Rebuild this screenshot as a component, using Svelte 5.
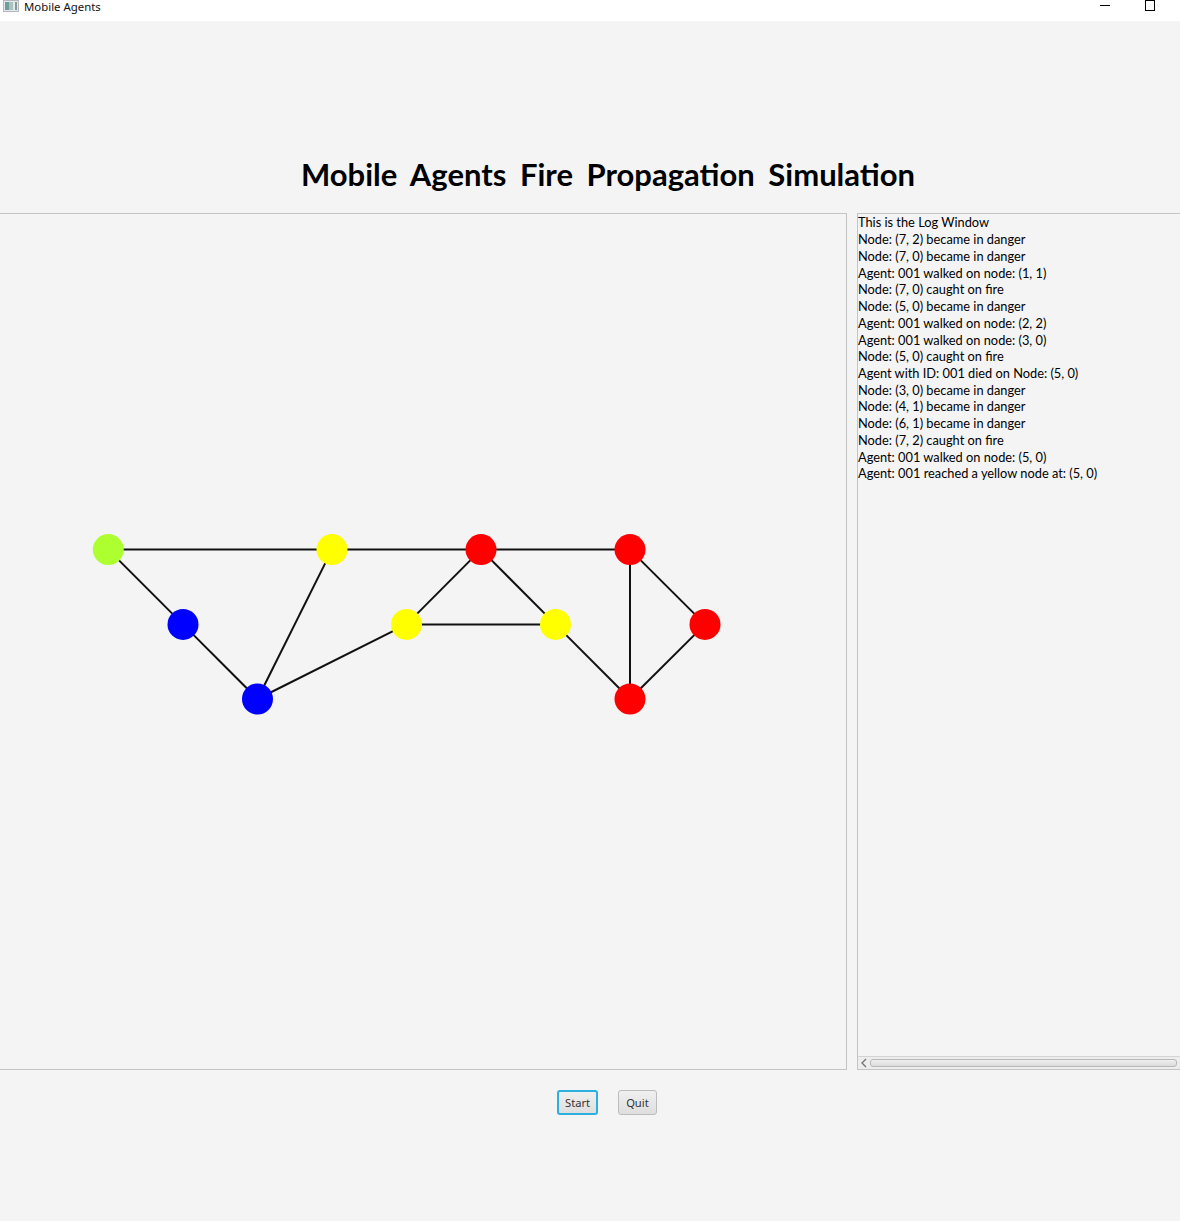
<script>
  const nodes = {
    a: { x: 108.3, y: 335.6, fill: "#adff2f" },
    b: { x: 183, y: 410.4, fill: "#0000ff" },
    c: { x: 257.5, y: 485, fill: "#0000ff" },
    d: { x: 332, y: 335.6, fill: "#ffff00" },
    e: { x: 406.5, y: 410.4, fill: "#ffff00" },
    f: { x: 481, y: 335.6, fill: "#ff0000" },
    g: { x: 555.5, y: 410.4, fill: "#ffff00" },
    h: { x: 630, y: 335.6, fill: "#ff0000" },
    i: { x: 705, y: 410.4, fill: "#ff0000" },
    j: { x: 630, y: 485, fill: "#ff0000" },
  };
  const edges = ["ad", "df", "fh", "ab", "bc", "cd", "ce", "ef", "eg", "fg", "gj", "hj", "hi", "ij"];

  const log = [
    "This is the Log Window",
    "Node: (7, 2) became in danger",
    "Node: (7, 0) became in danger",
    "Agent: 001 walked on node: (1, 1)",
    "Node: (7, 0) caught on fire",
    "Node: (5, 0) became in danger",
    "Agent: 001 walked on node: (2, 2)",
    "Agent: 001 walked on node: (3, 0)",
    "Node: (5, 0) caught on fire",
    "Agent with ID: 001 died on Node: (5, 0)",
    "Node: (3, 0) became in danger",
    "Node: (4, 1) became in danger",
    "Node: (6, 1) became in danger",
    "Node: (7, 2) caught on fire",
    "Agent: 001 walked on node: (5, 0)",
    "Agent: 001 reached a yellow node at: (5, 0)",
  ];
</script>

<div class="window">
  <header class="titlebar">
    <div class="app">
      <svg class="app-icon" width="16" height="14" viewBox="0 0 16 14">
        <rect x="0.5" y="1.5" width="15" height="11" fill="#e4e8e8" stroke="#b4b8bc" />
        <rect x="2" y="3" width="4" height="8" fill="#6f9d9a" />
        <rect x="6" y="3" width="4" height="8" fill="#a9c4c0" />
        <rect x="12" y="3" width="2" height="8" fill="#8a969c" />
      </svg>
      <span class="app-name">Mobile Agents</span>
    </div>
    <div class="controls">
      <span class="minimize"></span>
      <span class="maximize"></span>
    </div>
  </header>

  <h1>Mobile Agents Fire Propagation Simulation</h1>

  <main>
    <section class="graph">
      <svg width="846" height="855" viewBox="0 0 846 855">
        {#each edges as e}
          <line x1={nodes[e[0]].x} y1={nodes[e[0]].y} x2={nodes[e[1]].x} y2={nodes[e[1]].y} stroke="#111" stroke-width="2" />
        {/each}
        {#each Object.values(nodes) as n}
          <circle cx={n.x} cy={n.y} r="15.5" fill={n.fill} />
        {/each}
      </svg>
    </section>

    <section class="log">
      <div class="lines">
        {#each log as line}
          <div>{line}</div>
        {/each}
      </div>
      <div class="scrollbar">
        <svg width="8" height="10" viewBox="0 0 8 10">
          <path d="M6 1 L2 5 L6 9" fill="none" stroke="#777" stroke-width="1.4" />
        </svg>
        <div class="thumb"></div>
      </div>
    </section>
  </main>

  <footer>
    <button class="focused">Start</button>
    <button>Quit</button>
  </footer>
</div>

<style>
  :global(body) {
    background: #f4f4f4;
  }
  .window {
    width: 1180px;
    height: 1221px;
    display: flex;
    flex-direction: column;
    background: #f4f4f4;
    overflow: hidden;
  }
  .titlebar {
    height: 21px;
    flex: none;
    background: #fff;
    display: flex;
    justify-content: space-between;
    font-family: "Noto Sans", sans-serif;
    font-size: 11.4px;
    color: #111;
  }
  .app {
    display: flex;
    align-items: flex-start;
    gap: 5px;
    padding-left: 3px;
    line-height: 12px;
  }
  .app-icon {
    margin-top: -1px;
  }
  .app-name {
    margin-top: 1px;
  }
  .controls {
    display: flex;
    align-items: flex-start;
    gap: 35px;
    padding-right: 25px;
  }
  .minimize {
    width: 10px;
    height: 1px;
    margin-top: 5px;
    background: #000;
  }
  .maximize {
    width: 8px;
    height: 9px;
    margin-top: 0;
    border: 1px solid #000;
  }
  h1 {
    margin: 0;
    height: 192px;
    flex: none;
    box-sizing: border-box;
    padding: 134px 0 0 36px;
    text-align: center;
    font-family: "Lato", sans-serif;
    font-size: 31px;
    line-height: 38px;
    font-weight: 700;
    color: #000;
    word-spacing: 6px;
  }
  main {
    height: 857px;
    flex: none;
    display: flex;
    gap: 10px;
  }
  .graph {
    width: 847px;
    box-sizing: border-box;
    border: 1px solid #c4c4c4;
    border-left: 0;
    overflow: hidden;
  }
  .graph svg {
    display: block;
  }
  .log {
    flex: 1;
    box-sizing: border-box;
    border: 1px solid #c4c4c4;
    border-right: 0;
    display: flex;
    flex-direction: column;
  }
  .lines {
    flex: 1;
    padding: 0.4px 0 0 0;
    font-family: "Lato", sans-serif;
    font-size: 12.8px;
    line-height: 16.73px;
    color: #000;
  }
  .scrollbar {
    height: 12px;
    flex: none;
    display: flex;
    align-items: center;
    gap: 2px;
    padding: 0 3px 0 2px;
    background: #ededed;
    border-top: 1px solid #d4d4d4;
  }
  .thumb {
    flex: 1;
    height: 8px;
    box-sizing: border-box;
    border: 1px solid #b8b8b8;
    border-radius: 3px;
    background: linear-gradient(#efefef, #dcdcdc);
  }
  footer {
    flex: none;
    display: flex;
    gap: 20px;
    padding: 20px 0 0 557px;
  }
  button {
    height: 25px;
    padding: 0 7px;
    border: 1px solid #bcbcbc;
    border-radius: 3px;
    background: linear-gradient(#f0f0f0, #dedede);
    font-family: "Noto Sans", sans-serif;
    font-size: 11.2px;
    color: #333;
  }
  .focused {
    border: 2px solid #2bb0e0;
    padding: 0 6px;
  }
</style>
